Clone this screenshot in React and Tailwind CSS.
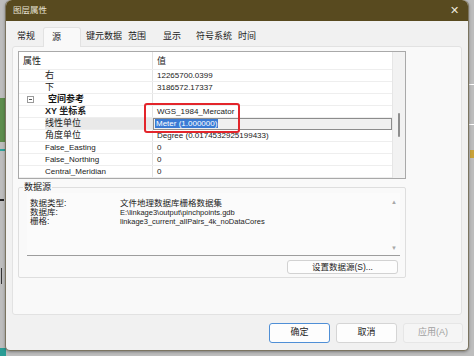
import React from 'react';

const tabs = [
  { label: '常规', w: 'w-[32px]', pl: 'pl-[6px]' },
  { label: '源', w: 'w-[38px]', pl: 'pl-[8px]', active: true },
  { label: '键元数据', w: 'w-[43px]', pl: 'pl-[5px]' },
  { label: '范围', w: 'w-[33px]', pl: 'pl-[4px]' },
  { label: '显示', w: 'w-[34px]', pl: 'pl-[6px]' },
  { label: '符号系统', w: 'w-[43px]', pl: 'pl-[5px]' },
  { label: '时间', w: 'w-[30px]', pl: 'pl-[4px]' },
];

const rows = [
  { name: '右', value: '12265700.0399' },
  { name: '下', value: '3186572.17337' },
  { name: '空间参考', bold: true, group: true },
  { name: 'XY 坐标系', bold: true, value: 'WGS_1984_Mercator' },
  { name: '线性单位', edit: 'Meter (1.000000)' },
  { name: '角度单位', value: 'Degree (0.0174532925199433)' },
  { name: 'False_Easting', value: '0' },
  { name: 'False_Northing', value: '0' },
  { name: 'Central_Meridian', value: '0' },
];

const sourceInfo = [
  { k: '数据类型:', v: '文件地理数据库栅格数据集', cjk: true },
  { k: '数据库:', v: 'E:\\linkage3\\output\\pinchpoints.gdb' },
  { k: '栅格:', v: 'linkage3_current_allPairs_4k_noDataCores' },
];

const PropertyRow = ({ row }) => (
  <div className="flex h-[12px] border-b border-[#eeeeee]">
    <div className="w-[134px] flex items-center border-r border-[#e3e3e3] bg-white">
      {row.group ? (
        <>
          <div className="ml-[8px] w-[7px] h-[7px] border border-[#9a9a9a] flex items-center justify-center">
            <div className="w-[3px] h-px bg-[#555]" />
          </div>
          <span className="ml-[14px] text-[9px] font-bold text-[#111]">{row.name}</span>
        </>
      ) : (
        <span
          className={`ml-[26px] h-full flex items-center pr-[6px] flex-1 ${row.edit ? 'bg-[#e9e9e9]' : ''} ${
            row.bold ? 'font-bold text-[9px]' : /^[A-Z]/.test(row.name) ? 'text-[8px]' : 'text-[9px]'
          } text-[#222]`}
        >
          {row.name}
        </span>
      )}
    </div>
    <div className="flex-1 flex items-center bg-white">
      {row.edit ? (
        <div className="w-full h-[12px] border border-[#8c8c8c] bg-[#f0f0f0] flex items-center pl-px">
          <span className="bg-[#3a7bd5] text-white text-[8px] leading-[9px] px-[1px]">{row.edit}</span>
        </div>
      ) : (
        <span className="pl-[4px] text-[8px] text-[#222]">{row.value}</span>
      )}
    </div>
  </div>
);

const App = () => {
  return (
    <div className="relative w-[474px] h-[356px] overflow-hidden bg-[#bdbdbd] font-['Liberation_Sans','Noto_Sans_CJK_SC',sans-serif]">
      {/* desktop bits peeking out around the window */}
      <div className="absolute left-0 top-[98px] w-[5px] h-[44px] bg-[#5d8c4c]" />
      <div className="absolute left-0 top-[149px] w-[5px] h-[2px] bg-[#2fa39b]" />
      <div className="absolute left-0 top-[199px] w-[4px] h-[2px] bg-[#222]" />
      <div className="absolute left-[1px] top-[268px] w-[3px] h-[16px] border-l border-[#333]" />
      <div className="absolute left-0 top-[348px] w-[6px] h-[8px] bg-[#2a9c95]" />
      <div className="absolute right-0 top-[84px] w-[5px] h-px bg-white" />
      <div className="absolute right-0 top-[124px] w-[5px] h-px bg-white" />
      <div className="absolute right-0 top-[150px] w-[4px] h-[8px] bg-[#c9a23a]" />

      <div className="absolute left-[5px] top-0 w-[464px] h-[351px] flex flex-col bg-[#f1f1f1] border-x border-b border-[#7b7460] rounded-t-[6px] rounded-b-[5px] shadow-[0_1px_3px_rgba(0,0,0,0.35)]">
        {/* title bar */}
        <div className="h-[21px] flex items-center justify-between bg-[#584a1f] rounded-t-[6px] px-[7px]">
          <span className="text-[8.5px] text-[#e7e2d4]">图层属性</span>
          <span className="text-[11px] leading-none text-[#ece8dc] mr-[2px]">✕</span>
        </div>

        {/* tabs */}
        <div className="h-[25px] flex items-end pl-[5px]">
          {tabs.map((t) => (
            <div
              key={t.label}
              className={`${t.w} ${t.pl} flex items-center text-[9px] text-[#222] ${
                t.active
                  ? 'h-[20px] bg-[#f9f9f9] border-x border-t border-[#e2e2e2] rounded-t-[3px] -mb-px relative z-10'
                  : 'h-[18px]'
              }`}
            >
              {t.label}
            </div>
          ))}
        </div>

        {/* tab page */}
        <div className="mx-[6px] h-[269px] bg-[#f9f9f9] border border-[#e2e2e2] rounded-[3px] px-[5px] pt-[4px]">
          {/* property grid */}
          <div className="w-[388px] h-[128px] border border-[#a9a9a9] flex bg-white">
            <div className="flex-1 flex flex-col">
              <div className="flex h-[18px] border-b border-[#eeeeee]">
                <div className="w-[134px] pl-[4px] pt-[2px] flex items-center text-[9px] text-[#222] border-r border-[#e3e3e3]">属性</div>
                <div className="flex-1 pl-[4px] pt-[2px] flex items-center text-[9px] text-[#222]">值</div>
              </div>
              {rows.map((r) => (
                <PropertyRow key={r.name} row={r} />
              ))}
            </div>
            <div className="w-[13px] bg-[#f2f2f2] border-l border-[#e6e6e6] flex flex-col items-center">
              <div className="mt-[61px] w-[2px] h-[24px] bg-[#8e8e8e] rounded-full" />
            </div>
          </div>

          {/* data source group */}
          <div className="relative mt-[8px] w-[388px] h-[91px] border border-[#dedede] rounded-[2px] flex flex-col">
            <span className="absolute left-[4px] -top-[6px] px-[1px] bg-[#f9f9f9] text-[9px] leading-[11px] text-[#222]">数据源</span>
            <div className="ml-[8px] mr-[5px] mt-[5px] h-[63px] bg-[#fbfbfb] border-b border-[#9d9d9d] flex">
              <div className="flex-1 pt-[6px] pl-[3px]">
                {sourceInfo.map((s) => (
                  <div key={s.k} className="flex h-[9px] items-center text-[#222]">
                    <span className="w-[90px] text-[8.5px] leading-[9px]">{s.k}</span>
                    <span className={s.cjk ? 'text-[8.5px] leading-[9px]' : 'text-[7.5px] leading-[9px]'}>{s.v}</span>
                  </div>
                ))}
              </div>
              <div className="w-[12px] flex flex-col items-center justify-between pt-[6px] pb-[4px] text-[6px] leading-none text-[#a8a8a8]">
                <span>▲</span>
                <span>▼</span>
              </div>
            </div>
            <div className="flex justify-end mt-[4px] mr-[7px]">
              <div className="w-[111px] h-[14px] bg-[#fdfdfd] border border-[#d2d2d2] rounded-[3px] flex items-center justify-center text-[8.5px] text-[#222]">
                设置数据源(S)...
              </div>
            </div>
          </div>
        </div>

        {/* footer buttons */}
        <div className="flex-1 flex justify-end items-start gap-[6px] pt-[8px] pr-[5px]">
          <div className="w-[61px] h-[20px] bg-[#fdfdfd] border border-[#4f8fd6] rounded-[3px] flex items-center justify-center text-[9px] text-[#222]">确定</div>
          <div className="w-[61px] h-[20px] bg-[#fdfdfd] border border-[#d5d5d5] rounded-[3px] flex items-center justify-center text-[9px] text-[#222]">取消</div>
          <div className="w-[60px] h-[20px] bg-[#f5f5f5] border border-[#e6e6e6] rounded-[3px] flex items-center justify-center text-[9px] text-[#a0a0a0]">应用(A)</div>
        </div>
      </div>

      {/* red annotation */}
      <div className="absolute left-[144px] top-[103px] w-[96px] h-[30px] border-2 border-[#e3252b] rounded-[3px]" />
    </div>
  );
};

export default App;
